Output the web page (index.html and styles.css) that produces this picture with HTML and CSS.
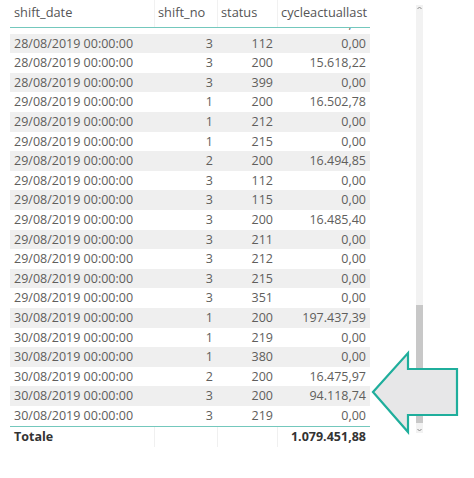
FILE: index.html
```html
<!DOCTYPE html>
<html>
<head>
<meta charset="utf-8">
<link rel="stylesheet" href="styles.css">
</head>
<body>
<div class="visual">
  <div class="table">
    <div class="row head">
      <div class="c c1">shift_date</div>
      <div class="c c2 left">shift_no</div>
      <div class="c c3 left">status</div>
      <div class="c c4 left">cycleactuallast</div>
    </div>
    <div class="viewport">
      <div class="rows">
        <div class="row"><div class="c c1">28/08/2019 00:00:00</div><div class="c c2">2</div><div class="c c3">380</div><div class="c c4">0,00</div></div>
        <div class="row alt"><div class="c c1">28/08/2019 00:00:00</div><div class="c c2">3</div><div class="c c3">112</div><div class="c c4">0,00</div></div>
        <div class="row"><div class="c c1">28/08/2019 00:00:00</div><div class="c c2">3</div><div class="c c3">200</div><div class="c c4">15.618,22</div></div>
        <div class="row alt"><div class="c c1">28/08/2019 00:00:00</div><div class="c c2">3</div><div class="c c3">399</div><div class="c c4">0,00</div></div>
        <div class="row"><div class="c c1">29/08/2019 00:00:00</div><div class="c c2">1</div><div class="c c3">200</div><div class="c c4">16.502,78</div></div>
        <div class="row alt"><div class="c c1">29/08/2019 00:00:00</div><div class="c c2">1</div><div class="c c3">212</div><div class="c c4">0,00</div></div>
        <div class="row"><div class="c c1">29/08/2019 00:00:00</div><div class="c c2">1</div><div class="c c3">215</div><div class="c c4">0,00</div></div>
        <div class="row alt"><div class="c c1">29/08/2019 00:00:00</div><div class="c c2">2</div><div class="c c3">200</div><div class="c c4">16.494,85</div></div>
        <div class="row"><div class="c c1">29/08/2019 00:00:00</div><div class="c c2">3</div><div class="c c3">112</div><div class="c c4">0,00</div></div>
        <div class="row alt"><div class="c c1">29/08/2019 00:00:00</div><div class="c c2">3</div><div class="c c3">115</div><div class="c c4">0,00</div></div>
        <div class="row"><div class="c c1">29/08/2019 00:00:00</div><div class="c c2">3</div><div class="c c3">200</div><div class="c c4">16.485,40</div></div>
        <div class="row alt"><div class="c c1">29/08/2019 00:00:00</div><div class="c c2">3</div><div class="c c3">211</div><div class="c c4">0,00</div></div>
        <div class="row"><div class="c c1">29/08/2019 00:00:00</div><div class="c c2">3</div><div class="c c3">212</div><div class="c c4">0,00</div></div>
        <div class="row alt"><div class="c c1">29/08/2019 00:00:00</div><div class="c c2">3</div><div class="c c3">215</div><div class="c c4">0,00</div></div>
        <div class="row"><div class="c c1">29/08/2019 00:00:00</div><div class="c c2">3</div><div class="c c3">351</div><div class="c c4">0,00</div></div>
        <div class="row alt"><div class="c c1">30/08/2019 00:00:00</div><div class="c c2">1</div><div class="c c3">200</div><div class="c c4">197.437,39</div></div>
        <div class="row"><div class="c c1">30/08/2019 00:00:00</div><div class="c c2">1</div><div class="c c3">219</div><div class="c c4">0,00</div></div>
        <div class="row alt"><div class="c c1">30/08/2019 00:00:00</div><div class="c c2">1</div><div class="c c3">380</div><div class="c c4">0,00</div></div>
        <div class="row"><div class="c c1">30/08/2019 00:00:00</div><div class="c c2">2</div><div class="c c3">200</div><div class="c c4">16.475,97</div></div>
        <div class="row alt"><div class="c c1">30/08/2019 00:00:00</div><div class="c c2">3</div><div class="c c3">200</div><div class="c c4">94.118,74</div></div>
        <div class="row"><div class="c c1">30/08/2019 00:00:00</div><div class="c c2">3</div><div class="c c3">219</div><div class="c c4">0,00</div></div>
      </div>
    </div>
    <div class="row total">
      <div class="c c1">Totale</div>
      <div class="c c2"></div>
      <div class="c c3"></div>
      <div class="c c4">1.079.451,88</div>
    </div>
  </div>
  <div class="scrollbar">
    <svg class="chev" width="7" height="6" viewBox="0 0 7 6"><polyline points="1.5,4 3.5,2 5.5,4" fill="none" stroke="#8a8a8a" stroke-width="1"/></svg>
    <div class="track"><div class="thumb"></div></div>
    <svg class="chev" width="7" height="6" viewBox="0 0 7 6"><polyline points="1.5,2 3.5,4 5.5,2" fill="none" stroke="#8a8a8a" stroke-width="1"/></svg>
  </div>
  <svg class="callout" width="92" height="86" viewBox="0 0 92 86">
    <polygon points="3,42 38,3 38,19 87,19 87,65 38,65 38,82" fill="#e7e7e8" stroke="#1fae9c" stroke-width="2.2" stroke-linejoin="miter"/>
  </svg>
</div>
</body>
</html>
```

FILE: styles.css
```css
html, body {
  margin: 0;
  padding: 0;
  background: #ffffff;
}

.visual {
  position: relative;
  display: flex;
  align-items: flex-start;
  gap: 46px;
  padding-left: 10px;
  width: 474px;
  height: 478px;
  box-sizing: border-box;
  font-family: "Open Sans", "Noto Sans", sans-serif;
  font-size: 12.5px;
  color: #605e5c;
}

.table {
  width: 360px;
  display: flex;
  flex-direction: column;
}

.row {
  display: grid;
  grid-template-columns: 144px 63px 60px 93px;
  height: 19.6px;
  line-height: 19.6px;
  white-space: nowrap;
}

.row.alt {
  background: #efefef;
}

.c {
  padding: 0 4px;
  overflow: hidden;
  text-align: right;
}

.c1 {
  text-align: left;
}

.head {
  height: 27px;
  line-height: 24px;
  border-bottom: 1px solid #74c8bd;
  color: #555555;
  font-size: 12.8px;
}

.head .c {
  padding-left: 3px;
}

.head .c1 {
  padding-left: 4px;
}

.head .c2, .head .c3, .head .c4 {
  border-left: 1px solid #f1f1f1;
}

.left {
  text-align: left;
}

.viewport {
  height: 398px;
  overflow: hidden;
  border-bottom: 1px solid #74c8bd;
}

.rows {
  margin-top: -14px;
}

.total {
  height: 20px;
  line-height: 20px;
  font-weight: 700;
  color: #333333;
}

.total .c2, .total .c3, .total .c4 {
  border-left: 1px solid #f0f0f0;
}

.scrollbar {
  width: 7px;
  margin-top: 5px;
  height: 428px;
  background: #f2f2f2;
  display: flex;
  flex-direction: column;
  align-items: center;
}

.chev {
  display: block;
  flex: none;
}

.track {
  flex: 1;
  width: 7px;
  display: flex;
  flex-direction: column;
  justify-content: flex-end;
  padding-bottom: 4px;
}

.thumb {
  height: 118px;
  background: #c8c8c8;
}

.callout {
  position: absolute;
  left: 370px;
  top: 350px;
}
```
